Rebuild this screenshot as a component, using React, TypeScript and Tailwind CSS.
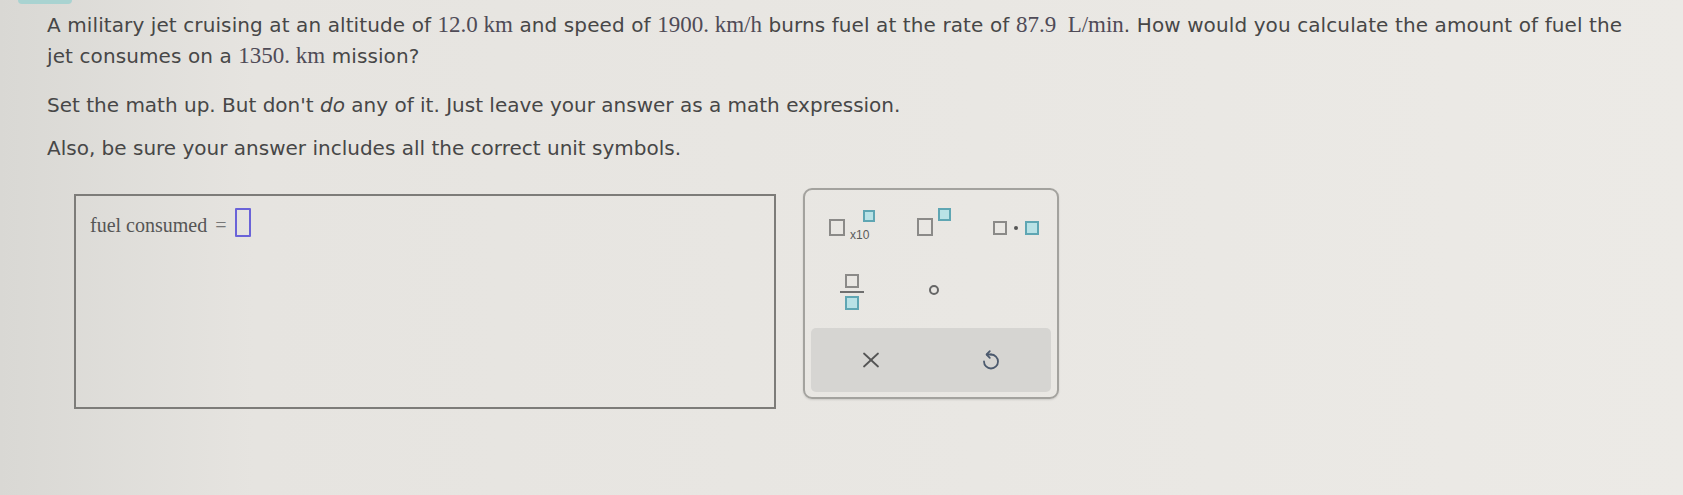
import React from "react";

const Num = ({ children }: { children: React.ReactNode }) => (
  <span className="font-['Liberation_Serif',serif] text-[23px] leading-none tracking-normal text-[#4f4b57]">{children}</span>
);

const GraySq = ({ className = "" }: { className?: string }) => (
  <div className={"border-2 border-[#8b8a88] " + className} />
);

const TealSq = ({ className = "" }: { className?: string }) => (
  <div className={"border-2 border-[#5fa6b3] bg-[#b9e2e6] " + className} />
);

const Palette = () => {
  return (
    <div className="w-[256px] h-[211px] flex flex-col rounded-[9px] border-2 border-[#a3a29e] px-[6px] pb-[5px] shadow-[0_1px_2px_rgba(0,0,0,0.12)]">
      <div className="w-[246px] mx-auto pt-[18px] grid grid-cols-3">
        {/* scientific notation */}
        <div className="flex justify-center">
          <div className="flex items-start mt-[2px]">
            <GraySq className="w-[16px] h-[17px] mt-[9px]" />
            <div className="flex flex-col ml-[5px] w-[25px]">
              <TealSq className="w-[12px] h-[12px] self-end" />
              <span className="mt-[8px] leading-[11px] text-[12px] text-[#5a5a5a] font-['Liberation_Sans',sans-serif]">x10</span>
            </div>
          </div>
        </div>
        {/* exponent */}
        <div className="flex justify-center">
          <div className="flex items-start">
            <GraySq className="w-[16px] h-[18px] mt-[10px]" />
            <TealSq className="w-[13px] h-[13px] ml-[5px]" />
          </div>
        </div>
        {/* multiply */}
        <div className="flex justify-center">
          <div className="flex items-center gap-[7px] mt-[7px]">
            <GraySq className="w-[14px] h-[14px]" />
            <div className="w-[4px] h-[4px] rounded-full bg-[#555]" />
            <TealSq className="w-[14px] h-[14px]" />
          </div>
        </div>
      </div>
      <div className="w-[246px] mx-auto mt-[33px] grid grid-cols-3">
        <div className="flex justify-center">
          <div className="flex flex-col items-center">
            <GraySq className="w-[14px] h-[14px]" />
            <div className="w-[24px] h-[2px] bg-[#6f6f6f] mt-[3px]" />
            <TealSq className="w-[14px] h-[14px] mt-[3px]" />
          </div>
        </div>
        <div className="flex justify-center">
          <div className="w-[10px] h-[10px] rounded-full border-2 border-[#666] mt-[11px]" />
        </div>
        <div />
      </div>
      <div className="mt-auto h-[64px] rounded-[5px] bg-[#d6d5d2] grid grid-cols-2">
        <button className="flex items-center justify-center">
          <svg width="18" height="16" viewBox="0 0 18 16" fill="none" stroke="#555" strokeWidth="1.8" strokeLinecap="round">
            <path d="M2 1.5 L16 14.5" />
            <path d="M16 1.5 L2 14.5" />
          </svg>
        </button>
        <button className="flex items-center justify-center">
          <svg width="24" height="24" viewBox="0 0 24 24" fill="none" stroke="#4c5a6e" strokeWidth="1.8" strokeLinecap="round" strokeLinejoin="round">
            <path d="M12 6.5 A7 7 0 1 1 5 13.5" />
            <path d="M8 6.5 H12" />
            <path d="M10.8 3.2 L7.6 6.5 L10.8 9.8" />
          </svg>
        </button>
      </div>
    </div>
  );
};

export default function App() {
  return (
    <div className="w-full h-[495px] overflow-hidden bg-linear-to-r from-[#d9d8d4] via-[#e6e4e0] via-15% to-[#eceae6] text-[#474747] font-['DejaVu_Sans',sans-serif]">
      <div className="ml-[18px] w-[54px] h-[4px] rounded-b-md bg-[#a9d3d1]" />
      <div className="pl-[47px] pr-[40px] text-[20px] leading-[31px]">
        <p className="mt-[6px] tracking-[0.1px]">
          A military jet cruising at an altitude of <Num>12.0 km</Num> and speed of <Num>1900. km/h</Num> burns fuel at the
          rate of <Num>87.9&nbsp; L/min</Num>. How would you calculate the amount of fuel the jet consumes on a{" "}
          <Num>1350. km</Num> mission?
        </p>
        <p className="mt-[18px]">
          Set the math up. But don't <i>do</i> any of it. Just leave your answer as a math expression.
        </p>
        <p className="mt-[12px]">Also, be sure your answer includes all the correct unit symbols.</p>
      </div>
      <div className="pl-[74px] mt-[24px] flex items-start gap-[27px]">
        <div className="mt-[6px] w-[702px] h-[215px] border-2 border-[#7d7c79] px-[14px] pt-[12px]">
          <div className="flex items-start">
            <span className="mt-[3px] leading-[29px] text-[20px] text-[#555] font-['Liberation_Serif',serif]">
              fuel consumed
            </span>
            <span className="mt-[3px] ml-[8px] leading-[29px] text-[20px] text-[#777] font-['Liberation_Serif',serif]">
              =
            </span>
            <div className="ml-[9px] w-[16px] h-[29px] border-2 border-[#6a63d8] rounded-[1px]" />
          </div>
        </div>
        <Palette />
      </div>
    </div>
  );
}
